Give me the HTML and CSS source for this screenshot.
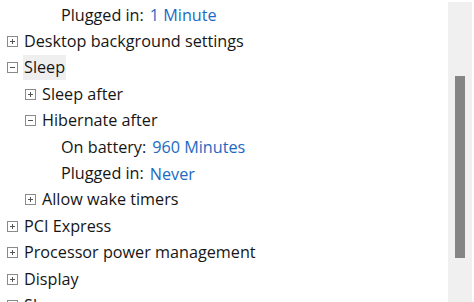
FILE: index.html
```html
<!DOCTYPE html>
<html>
<head>
<meta charset="utf-8">
<link rel="stylesheet" href="styles.css">
</head>
<body>
<div class="window">
  <div class="tree">
    <div class="row l2"><span class="label">Plugged in:</span><span class="val">1 Minute</span></div>
    <div class="row l0"><span class="box plus"></span><span class="label">Desktop background settings</span></div>
    <div class="row l0"><span class="box minus"></span><span class="label sel">Sleep</span></div>
    <div class="row l1"><span class="box plus"></span><span class="label">Sleep after</span></div>
    <div class="row l1"><span class="box minus"></span><span class="label">Hibernate after</span></div>
    <div class="row l2"><span class="label">On battery:</span><span class="val">960 Minutes</span></div>
    <div class="row l2"><span class="label">Plugged in:</span><span class="val">Never</span></div>
    <div class="row l1"><span class="box plus"></span><span class="label">Allow wake timers</span></div>
    <div class="row l0"><span class="box plus"></span><span class="label">PCI Express</span></div>
    <div class="row l0"><span class="box plus"></span><span class="label">Processor power management</span></div>
    <div class="row l0"><span class="box plus"></span><span class="label">Display</span></div>
    <div class="row l0"><span class="box plus"></span><span class="label">Sleep</span></div>
  </div>
  <div class="scrollbar"><div class="thumb"></div></div>
</div>
</body>
</html>
```

FILE: styles.css
```css
html, body {
  margin: 0;
  padding: 0;
  background: #ffffff;
}
.window {
  width: 474px;
  height: 302px;
  overflow: hidden;
  display: flex;
  font-family: "Open Sans", "Noto Sans", sans-serif;
  font-size: 16.2px;
  color: #161616;
}
.tree {
  flex: 1;
  padding-top: 2px;
  overflow: hidden;
}
.row {
  height: 26.4px;
  display: flex;
  align-items: center;
  white-space: nowrap;
}
.l0 { padding-left: 7px; }
.l1 { padding-left: 25px; }
.l2 { padding-left: 60px; }
.label {
  line-height: 25px;
  padding: 0 1px;
}
.label.sel {
  background: #efefef;
}
.val {
  color: #1c6ac2;
  margin-left: 5px;
}
.box {
  width: 9px;
  height: 9px;
  border: 1px solid #8a8a8a;
  box-sizing: content-box;
  margin-right: 5px;
  position: relative;
  flex: none;
}
.box::before {
  content: "";
  position: absolute;
  left: 2px;
  top: 4px;
  width: 5px;
  height: 1px;
  background: #555;
}
.box.plus::after {
  content: "";
  position: absolute;
  left: 4px;
  top: 2px;
  width: 1px;
  height: 5px;
  background: #555;
}
.scrollbar {
  width: 24px;
  margin-right: 2px;
  margin-top: 2px;
  background: #f0f0f0;
  display: flex;
  flex-direction: column;
  align-items: center;
  padding-top: 74px;
  box-sizing: border-box;
  flex: none;
}
.thumb {
  width: 10px;
  height: 182px;
  background: #858585;
}
```
